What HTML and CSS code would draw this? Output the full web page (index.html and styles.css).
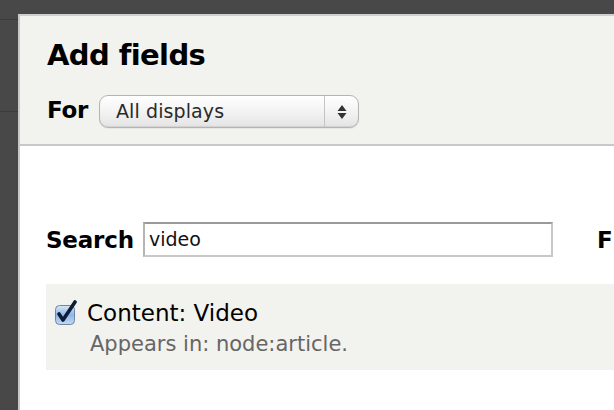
FILE: index.html
```html
<!DOCTYPE html>
<html>
<head>
<meta charset="utf-8">
<link rel="stylesheet" href="styles.css">
</head>
<body>
<div class="page">
  <div class="topbar"></div>
  <div class="main">
    <div class="strip">
      <div class="strip-a"></div>
      <div class="strip-b"></div>
      <div class="strip-c"></div>
    </div>
    <div class="modal">
      <div class="modal-head">
        <h1 class="title">Add fields</h1>
        <div class="for-row">
          <span class="for-label">For</span>
          <div class="select">
            <span class="select-text">All displays</span>
            <span class="select-arrows">
              <svg width="10" height="16" viewBox="0 0 10 16"><path d="M5 1 L9.5 7 L0.5 7 Z M0.5 9 L9.5 9 L5 15 Z" fill="#333"/></svg>
            </span>
          </div>
        </div>
      </div>
      <div class="modal-body">
        <div class="search-row">
          <label class="search-label">Search</label>
          <div class="search-input">video</div>
          <span class="filter-label">Fi</span>
        </div>
        <div class="result">
          <div class="result-line">
            <span class="checkbox">
              <svg width="24" height="26" viewBox="0 0 24 26">
                <defs>
                  <linearGradient id="cb" x1="0" y1="0" x2="0" y2="1">
                    <stop offset="0" stop-color="#d9e8f8"/>
                    <stop offset="0.5" stop-color="#8fb6e6"/>
                    <stop offset="1" stop-color="#c4daf3"/>
                  </linearGradient>
                </defs>
                <rect x="1.5" y="5.5" width="19" height="19" rx="4" fill="url(#cb)" stroke="#6f87a6"/>
                <path d="M5 14 L9 20 L21 2" fill="none" stroke="#0c1d36" stroke-width="3.6" stroke-linecap="round" stroke-linejoin="round"/>
              </svg>
            </span>
            <span class="result-title">Content: Video</span>
          </div>
          <div class="result-desc">Appears in: node:article.</div>
        </div>
      </div>
    </div>
  </div>
</div>
</body>
</html>
```
FILE: styles.css
```css
html, body {
  margin: 0;
  padding: 0;
  background: #484848;
  width: 614px;
  height: 410px;
  overflow: hidden;
  font-family: "DejaVu Sans", "Liberation Sans", sans-serif;
}
.page {
  display: flex;
  flex-direction: column;
  height: 410px;
}
.topbar {
  height: 14px;
  background: #484848;
  flex: none;
}
.main {
  display: flex;
  flex: 1;
}
.strip {
  width: 18px;
  flex: none;
  display: flex;
  flex-direction: column;
}
.strip-a {
  height: 5px;
  border-bottom: 1px solid #3b3b3b;
}
.strip-b {
  height: 91px;
  border-bottom: 1px solid #3b3b3b;
}
.strip-c {
  flex: 1;
}
.modal {
  flex: 1;
  border-left: 2px solid #c9c9c7;
  border-top: 2px solid #cfcfcd;
  background: #fff;
  display: flex;
  flex-direction: column;
}
.modal-head {
  background: #f2f2ee;
  border-bottom: 2px solid #c8c8c6;
  height: 130px;
  box-sizing: border-box;
  padding: 21px 0 0 27px;
}
.title {
  margin: 0;
  font-size: 29px;
  font-weight: bold;
  line-height: 36px;
  letter-spacing: -0.6px;
  color: #000;
}
.for-row {
  display: flex;
  align-items: center;
  margin-top: 22px;
}
.for-label {
  font-size: 23px;
  font-weight: bold;
  color: #000;
  width: 52px;
  letter-spacing: -0.3px;
  position: relative;
  top: -2px;
}
.select {
  width: 260px;
  height: 33px;
  box-sizing: border-box;
  border-radius: 9px;
  border: 1px solid #b4b4b4;
  background: linear-gradient(#ffffff, #f3f3f3 50%, #e4e4e4);
  box-shadow: inset 0 -1px 1px rgba(0,0,0,0.08), 0 1px 1px rgba(0,0,0,0.05);
  display: flex;
  align-items: stretch;
}
.select-text {
  flex: 1;
  padding-left: 16px;
  font-family: "DejaVu Sans", "Liberation Sans", sans-serif;
  font-size: 19px;
  color: #2a2a2a;
  line-height: 31px;
  letter-spacing: 0.1px;
  border-right: 1px solid #c4c4c4;
}
.select-arrows {
  width: 33px;
  display: flex;
  align-items: center;
  justify-content: center;
}
.modal-body {
  padding: 76px 0 0 26px;
}
.search-row {
  display: flex;
  align-items: center;
  height: 35px;
}
.search-label {
  font-size: 23px;
  font-weight: bold;
  color: #000;
  width: 97px;
  letter-spacing: -0.2px;
}
.search-input {
  width: 410px;
  height: 35px;
  box-sizing: border-box;
  border: 2px solid #c8c8c8;
  border-top-color: #9a9a9a;
  border-left-color: #b5b5b5;
  background: #fff;
  font-family: "DejaVu Sans", "Liberation Sans", sans-serif;
  font-size: 19px;
  line-height: 31px;
  padding-left: 4px;
  color: #111;
}
.filter-label {
  margin-left: 44px;
  font-size: 23px;
  font-weight: bold;
  color: #000;
  white-space: nowrap;
}
.result {
  margin-top: 27px;
  background: #f2f2ee;
  height: 86px;
  box-sizing: border-box;
  padding: 14px 0 0 8px;
}
.result-line {
  display: flex;
  align-items: center;
}
.checkbox {
  width: 24px;
  height: 26px;
  display: flex;
  margin-right: 9px;
}
.result-title {
  font-size: 23px;
  color: #000;
  line-height: 30px;
}
.result-desc {
  margin-left: 36px;
  margin-top: 2px;
  font-size: 21px;
  color: #666;
  line-height: 28px;
}
```
